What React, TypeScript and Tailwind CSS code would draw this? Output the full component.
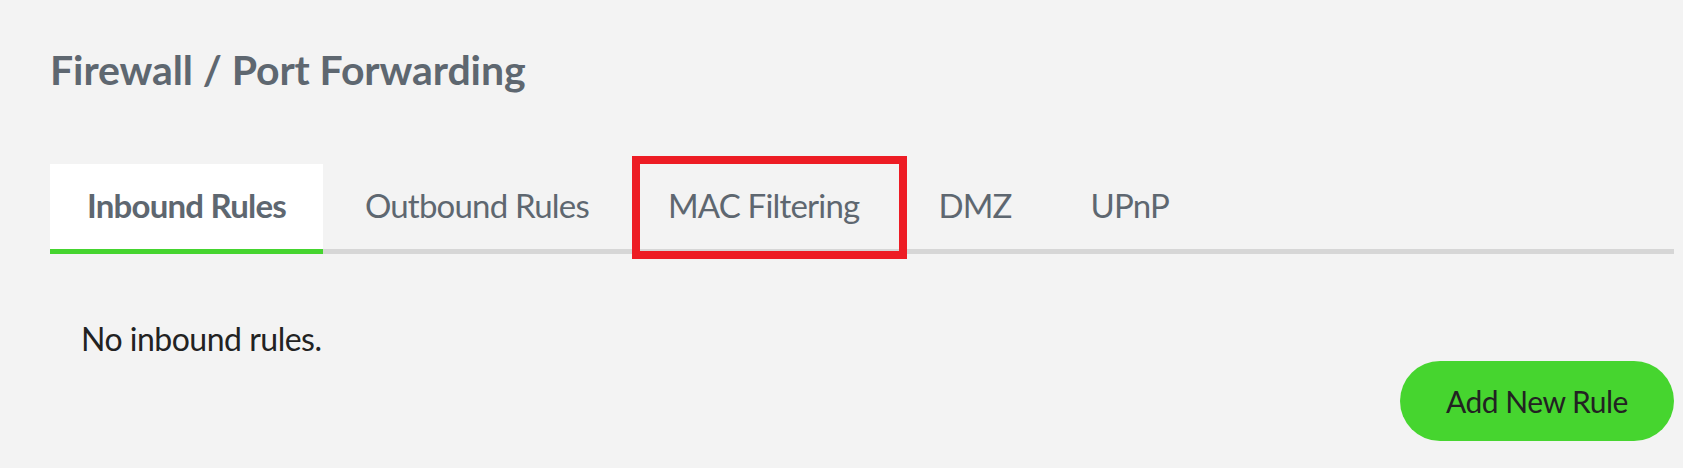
import React from 'react';

const font = { fontFamily: 'Lato, "Liberation Sans", sans-serif' };

const tabs = ['Inbound Rules', 'Outbound Rules', 'MAC Filtering', 'DMZ', 'UPnP'];

export default function App() {
  return (
    <div className="min-h-screen bg-[#f3f3f3] pl-[50px] pr-[9px] pt-[49px]" style={font}>
      {/* PAGE TITLE */}
      <h1 className="text-[41px] leading-[41px] font-bold tracking-[-0.1px] text-[#5e6770]">Firewall / Port Forwarding</h1>

      {/* TABS */}
      <div className="mt-[74px] flex gap-[5px] border-b-[5px] border-[#d6d6d6] text-[33px] tracking-[-0.8px] text-[#5e6770]">
        {tabs.map((t, i) =>
          i === 0 ? (
            <div
              key={t}
              className="-mb-[5px] flex h-[90px] items-center border-b-[5px] border-[#45d42f] bg-white px-[37px] pb-[2px] font-bold"
            >
              {t}
            </div>
          ) : (
            <div key={t} className="relative flex h-[85px] items-center px-[37px] pb-[2px]">
              {t}
              {t === 'MAC Filtering' && (
                <span className="absolute -top-[8px] -bottom-[10px] left-[1px] -right-[11px] border-[8px] border-[#ed1c24]" />
              )}
            </div>
          )
        )}
      </div>

      {/* CONTENT */}
      <p className="ml-[31px] mt-[69px] text-[32px] leading-[32px] tracking-[-0.5px] text-[#222]">No inbound rules.</p>
      <div className="mt-[6px] flex justify-end">
        <button className="h-[80px] w-[274px] rounded-full bg-[#46d52f] text-[30px] tracking-[-0.5px] text-[#222]">
          Add New Rule
        </button>
      </div>
    </div>
  );
}
